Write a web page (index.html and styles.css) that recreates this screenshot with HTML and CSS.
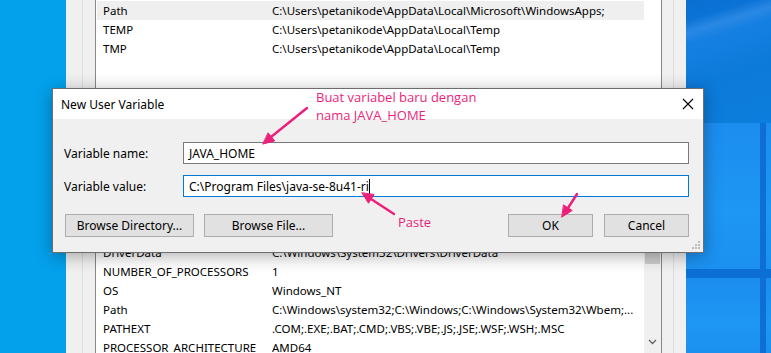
FILE: index.html
```html
<!DOCTYPE html>
<html>
<head>
  <title>New User Variable</title>
  <link rel="stylesheet" href="styles.css">
</head>
<body>
  <div class="screen">
    <div class="desk-left"></div>

    <div class="env-window">
      <div class="group">
        <div class="list user-list">
          <div class="row selected"><span class="name">Path</span><span class="value">C:\Users\petanikode\AppData\Local\Microsoft\WindowsApps;</span></div>
          <div class="row"><span class="name">TEMP</span><span class="value">C:\Users\petanikode\AppData\Local\Temp</span></div>
          <div class="row"><span class="name">TMP</span><span class="value">C:\Users\petanikode\AppData\Local\Temp</span></div>
        </div>

        <div class="list system-list">
          <div class="rows">
            <div class="row"><span class="name">DriverData</span><span class="value">C:\Windows\System32\Drivers\DriverData</span></div>
            <div class="row"><span class="name">NUMBER_OF_PROCESSORS</span><span class="value">1</span></div>
            <div class="row"><span class="name">OS</span><span class="value">Windows_NT</span></div>
            <div class="row"><span class="name">Path</span><span class="value">C:\Windows\system32;C:\Windows;C:\Windows\System32\Wbem;...</span></div>
            <div class="row"><span class="name">PATHEXT</span><span class="value">.COM;.EXE;.BAT;.CMD;.VBS;.VBE;.JS;.JSE;.WSF;.WSH;.MSC</span></div>
            <div class="row"><span class="name">PROCESSOR_ARCHITECTURE</span><span class="value">AMD64</span></div>
          </div>
          <div class="scrollbar">
            <div class="thumb"></div>
            <div class="scroll-down">
              <svg width="9" height="6" viewBox="0 0 9 6"><path d="M1 1 L4.5 4.5 L8 1" fill="none" stroke="#606060" stroke-width="1.3"/></svg>
            </div>
          </div>
        </div>
      </div>
    </div>

    <div class="desk-right">
      <div class="sky"></div>
      <div class="panes">
        <div class="pane"></div>
        <div class="pane"></div>
        <div class="pane"></div>
        <div class="pane"></div>
      </div>
    </div>

    <!-- dialog on top of the environment variables window -->
    <div class="dialog">
      <div class="titlebar">
        <span class="title">New User Variable</span>
        <svg class="close" width="12" height="12" viewBox="0 0 12 12"><path d="M1 1 L11 11 M11 1 L1 11" stroke="#000" stroke-width="1.1"/></svg>
      </div>
      <div class="dialog-body">
        <div class="field">
          <label>Variable name:</label>
          <div class="input">JAVA_HOME</div>
        </div>
        <div class="field">
          <label>Variable value:</label>
          <div class="input focused">C:\Program Files\java-se-8u41-ri<span class="caret"></span></div>
        </div>
        <div class="buttons">
          <button class="btn wide">Browse Directory...</button>
          <button class="btn wide">Browse File...</button>
          <span class="spacer"></span>
          <button class="btn">OK</button>
          <button class="btn">Cancel</button>
        </div>
      </div>
      <svg class="grip" width="10" height="10" viewBox="0 0 10 10">
        <rect x="7" y="1" width="2" height="2" fill="#bdbdbd"/>
        <rect x="4" y="4" width="2" height="2" fill="#bdbdbd"/>
        <rect x="7" y="4" width="2" height="2" fill="#bdbdbd"/>
        <rect x="1" y="7" width="2" height="2" fill="#bdbdbd"/>
        <rect x="4" y="7" width="2" height="2" fill="#bdbdbd"/>
        <rect x="7" y="7" width="2" height="2" fill="#bdbdbd"/>
      </svg>
    </div>

    <!-- annotations -->
    <svg class="arrows" width="771" height="353" viewBox="0 0 771 353">
      <g stroke="#ec1f7b" stroke-width="2.4" stroke-linecap="round" fill="#ec1f7b">
        <line x1="307" y1="108" x2="271" y2="137"/>
        <polygon points="263,144 274.7,140.9 268.3,133.1" stroke-width="1"/>
        <line x1="394" y1="214" x2="371" y2="199"/>
        <polygon points="362,193 368.5,203.2 373.9,194.8" stroke-width="1"/>
        <line x1="577" y1="194" x2="568" y2="208"/>
        <polygon points="562,217 572.2,210.5 563.8,205.1" stroke-width="1"/>
      </g>
    </svg>
    <div class="note note-name">Buat variabel baru dengan<br>nama JAVA_HOME</div>
    <div class="note note-paste">Paste</div>
  </div>
</body>
</html>
```

FILE: styles.css
```css
body {
  margin: 0;
  font-family: "Noto Sans", "Open Sans", sans-serif;
  font-size: 12px;
  color: #000;
}
.screen {
  position: relative;
  width: 771px;
  height: 353px;
  overflow: hidden;
  display: flex;
}
.desk-left {
  width: 66px;
  background-color: #03a1ec;
}
.env-window {
  width: 620px;
  box-sizing: border-box;
  padding: 0 12px 0 16px;
  background-color: #f0f0f0;
  display: flex;
}
.group {
  flex: 1;
  border-left: 1px solid #dcdcdc;
  border-right: 1px solid #dcdcdc;
  padding: 0 11px 0 12px;
  display: flex;
  flex-direction: column;
}
.list {
  background-color: white;
  border: 1px solid #828790;
  font-size: 11.5px;
}
.user-list {
  margin-top: -1px;
  height: 130px;
  padding-top: 1px;
  box-sizing: border-box;
}
.system-list {
  margin-top: 113px;
  flex: 1;
  margin-bottom: -10px;
  display: flex;
}
.rows {
  flex: 1;
}
.row {
  height: 19px;
  display: flex;
  align-items: center;
  padding-left: 6px;
  margin: 0 0 0 1px;
  white-space: nowrap;
}
.user-list .row {
  margin-right: 17px;
}
.row.selected {
  background-color: #efefef;
}
.name {
  width: 169px;
}
.scrollbar {
  width: 17px;
  background-color: #f0f0f0;
  display: flex;
  flex-direction: column;
}
.thumb {
  margin: 9px 1px 0 1px;
  height: 12px;
  background-color: #cdcdcd;
}
.scroll-down {
  margin-top: auto;
  height: 27px;
  display: flex;
  justify-content: center;
  padding-top: 4px;
  box-sizing: border-box;
}
.desk-right {
  flex: 1;
  display: flex;
  flex-direction: column;
  background-color: #0a6cd2;
}
.sky {
  height: 123px;
  background: linear-gradient(163deg, #0a6fd1 0%, #0b73d6 14%, #2a88e4 22%, #1580e2 30%, #0c7ad9 60%, #0d7edd 100%);
}
.panes {
  flex: 1;
  display: grid;
  grid-template-columns: 74px 1fr;
  grid-template-rows: 146px 1fr;
  column-gap: 6px;
  row-gap: 9px;
  background-color: #0b6fd5;
}
.pane {
  background: linear-gradient(180deg, #1b8def 0%, #1e96f3 60%, #1b90f0 100%);
}

/* dialog */
.dialog {
  position: absolute;
  left: 52px;
  top: 88px;
  width: 652px;
  height: 165px;
  box-sizing: border-box;
  border: 1px solid #6d6d6d;
  background-color: #f0f0f0;
  box-shadow: 0 3px 16px rgba(0,0,0,0.32);
  display: flex;
  flex-direction: column;
}
.titlebar {
  height: 30px;
  background-color: white;
  display: flex;
  align-items: center;
  padding: 0 9px 0 8px;
}
.title {
  flex: 1;
}
.dialog-body {
  padding: 23px 14px 0 11px;
}
.field {
  display: flex;
  align-items: center;
  margin-bottom: 11px;
}
.field label {
  width: 119px;
}
.input {
  width: 506px;
  height: 22px;
  box-sizing: border-box;
  border: 1px solid #7a7a7a;
  background-color: white;
  padding-left: 5px;
  display: flex;
  align-items: center;
}
.input.focused {
  border-color: #0078d7;
}
.caret {
  display: inline-block;
  width: 1px;
  height: 15px;
  background-color: black;
}
.buttons {
  display: flex;
  margin-top: 17px;
  padding-left: 1px;
}
.btn {
  width: 85px;
  height: 23px;
  font-family: inherit;
  font-size: 12px;
  color: #000;
  background-color: #e1e1e1;
  border: 1px solid #adadad;
  padding: 0;
  margin-right: 11px;
}
.btn:last-child {
  margin-right: 0;
}
.btn.wide {
  width: 129px;
  margin-right: 10px;
}
.spacer {
  flex: 1;
}
.grip {
  position: absolute;
  right: 2px;
  bottom: 2px;
}

/* annotations */
.arrows {
  position: absolute;
  left: 0;
  top: 0;
}
.note {
  position: absolute;
  color: #ec1f7b;
  font-family: "Open Sans", sans-serif;
  font-size: 13px;
  line-height: 18px;
}
.note-name {
  left: 316px;
  top: 88px;
}
.note-paste {
  left: 398px;
  top: 213px;
}
```
